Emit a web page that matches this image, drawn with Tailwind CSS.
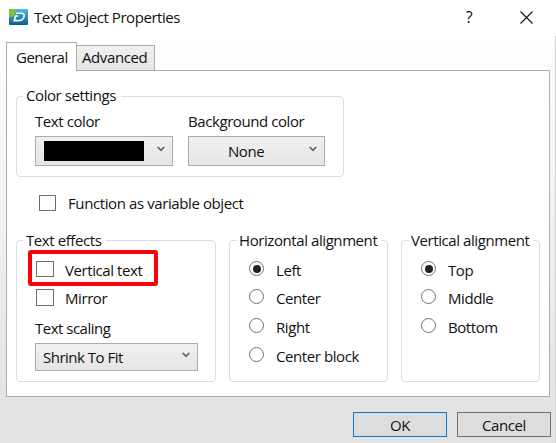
<!DOCTYPE html>
<html lang="en">
<head>
    <meta charset="UTF-8">
    <meta name="viewport" content="width=device-width, initial-scale=1.0">
    <title>Text Object Properties</title>
    <script src="https://cdn.jsdelivr.net/npm/@tailwindcss/browser@4"></script>
</head>
<body class="w-[556px] h-[443px] overflow-hidden bg-white font-['Open_Sans','Noto_Sans',sans-serif] text-[15px] leading-5 tracking-[-0.42px] text-[#111] whitespace-nowrap">
    <!-- Title bar -->
    <header class="flex items-center h-9 pl-[9px] pr-[23px]">
        <svg class="w-[19px] h-4 mt-[-3px]" viewBox="0 0 19 16">
            <defs>
                <linearGradient id="blue" x1="0" y1="0" x2="0" y2="1">
                    <stop offset="0" stop-color="#4fb8e4"/>
                    <stop offset="1" stop-color="#0a5c96"/>
                </linearGradient>
            </defs>
            <rect width="19" height="16" rx="1" fill="url(#blue)"/>
            <path d="M0 1Q0 0 1 0H8L6.5 4L4 8H0Z" fill="#7cc142"/>
            <path d="M7 4.2H12.3Q16 4.2 15 7.8Q13.9 11.6 10 11.6H5.2L6.6 7H9" fill="none" stroke="#fff" stroke-width="1.6"/>
        </svg>
        <h1 class="ml-[6px] mt-[-2px] tracking-[-0.45px]">Text Object Properties</h1>
        <div class="ml-auto flex items-center">
            <span class="text-[16px] w-2 text-center mt-[-2px]">?</span>
            <svg class="w-[13px] h-[13px] ml-[47px] mt-[-2px]" viewBox="0 0 13 13" fill="none" stroke="#111" stroke-width="1.1">
                <path d="M.5 .5L12.5 12.5M12.5 .5L.5 12.5"/>
            </svg>
        </div>
    </header>

    <main class="h-[407px] pl-[6px] pt-[6px] border-r border-[#cfcfcf] bg-linear-to-b from-white from-0% via-[#f1f1f1] via-45% to-[#e3e3e3] to-90%">
        <!-- Tabs -->
        <div class="flex items-end h-[28px]">
            <div class="relative z-10 w-[71px] h-[29px] mb-[-1px] pt-1 pl-[9px] bg-white border border-b-0 border-[#acacac] tracking-[-0.5px]">General</div>
            <div class="w-[78px] h-[25px] pt-px pl-[5px] bg-linear-to-b from-[#f0f0f0] to-[#e5e5e5] border border-l-0 border-b-0 border-[#acacac] tracking-[-0.4px]">Advanced</div>
        </div>

        <!-- General panel -->
        <section class="w-[544px] h-[327px] pt-[15px] pl-[9px] bg-white border border-[#acacac]">
            <fieldset class="w-[328px] h-[91px] pl-[18px] border border-[#d5dfe5] rounded-[4px]">
                <legend class="ml-[-12px] pl-[3px] pr-[5px] pb-[2px] leading-[18px]">Color settings</legend>
                <div class="flex gap-[15px] pt-[5px]">
                    <div class="w-[138px]">
                        <p>Text color</p>
                        <div class="flex items-center h-[30px] mt-[5px] pl-2 pr-[7px] border border-[#acacac] bg-linear-to-b from-[#f0f0f0] to-[#e5e5e5]">
                            <div class="w-[100px] h-5 bg-black"></div>
                            <svg class="w-2 h-[6px] ml-auto mt-[-4px]" viewBox="0 0 8 6" fill="none" stroke="#606060" stroke-width="1.7"><path d="M.7 1L4 4.4L7.3 1"/></svg>
                        </div>
                    </div>
                    <div class="w-[137px]">
                        <p>Background color</p>
                        <div class="flex items-center h-[30px] mt-[5px] pl-[39px] pr-[7px] border border-[#acacac] bg-linear-to-b from-[#f0f0f0] to-[#e5e5e5]">
                            <span>None</span>
                            <svg class="w-2 h-[6px] ml-auto mt-[-4px]" viewBox="0 0 8 6" fill="none" stroke="#606060" stroke-width="1.7"><path d="M.7 1L4 4.4L7.3 1"/></svg>
                        </div>
                    </div>
                </div>
            </fieldset>

            <div class="flex items-center h-5 mt-4 pl-[23px]">
                <span class="w-[17px] h-4 border border-[#707070] bg-white"></span>
                <span class="ml-3 tracking-[-0.4px]">Function as variable object</span>
            </div>

            <div class="flex gap-[13px] mt-[17px]">
                <fieldset class="w-[200px] h-[152px] pl-[18px] border border-[#d5dfe5] rounded-[4px]">
                    <legend class="ml-[-12px] pl-[3px] pr-[5px]">Text effects</legend>
                    <div class="relative pt-[10px]">
                        <!-- Highlight around the vertical text option -->
                        <div class="absolute left-[-7px] top-0 w-[130px] h-[36px] border-4 border-[#fb0007] rounded-[3px]"></div>
                        <div class="flex items-center h-5 pl-px">
                            <span class="w-[18px] h-4 mt-[-2px] border border-[#707070] bg-white"></span>
                            <span class="ml-[11px]">Vertical text</span>
                        </div>
                        <div class="flex items-center h-5 mt-2 pl-px">
                            <span class="w-[18px] h-[17px] mt-[-2px] border border-[#707070] bg-white"></span>
                            <span class="ml-[11px]">Mirror</span>
                        </div>
                    </div>
                    <p class="mt-[10px] tracking-[-0.5px]">Text scaling</p>
                    <div class="flex items-center w-[163px] h-[28px] mt-[5px] px-[7px] border border-[#acacac] bg-linear-to-b from-[#f0f0f0] to-[#e5e5e5]">
                        <span class="tracking-[-0.5px]">Shrink To Fit</span>
                        <svg class="w-2 h-[6px] ml-auto mt-[-4px]" viewBox="0 0 8 6" fill="none" stroke="#606060" stroke-width="1.7"><path d="M.7 1L4 4.4L7.3 1"/></svg>
                    </div>
                </fieldset>

                <fieldset class="w-[159px] h-[152px] pl-[19px] border border-[#d5dfe5] rounded-[4px]">
                    <legend class="ml-[-12px] pl-[2px] pr-[4px]">Horizontal alignment</legend>
                    <div class="grid gap-[9px] pt-[10px]">
                        <div class="flex items-center h-5">
                            <span class="flex items-center justify-center w-[15px] h-[15px] mt-[-3px] border border-[#707070] rounded-full"><i class="w-[8px] h-[8px] rounded-full bg-[#212121]"></i></span>
                            <span class="ml-3">Left</span>
                        </div>
                        <div class="flex items-center h-5 -mt-px">
                            <span class="w-[15px] h-[15px] mt-[-3px] border border-[#707070] rounded-full"></span>
                            <span class="ml-3">Center</span>
                        </div>
                        <div class="flex items-center h-5">
                            <span class="w-[15px] h-[15px] mt-[-3px] border border-[#707070] rounded-full"></span>
                            <span class="ml-3">Right</span>
                        </div>
                        <div class="flex items-center h-5">
                            <span class="w-[15px] h-[15px] mt-[-3px] border border-[#707070] rounded-full"></span>
                            <span class="ml-3">Center block</span>
                        </div>
                    </div>
                </fieldset>

                <fieldset class="w-[139px] h-[152px] pl-[19px] border border-[#d5dfe5] rounded-[4px]">
                    <legend class="ml-[-12px] pl-[2px] pr-[4px]">Vertical alignment</legend>
                    <div class="grid gap-[9px] pt-[10px]">
                        <div class="flex items-center h-5">
                            <span class="flex items-center justify-center w-[15px] h-[15px] mt-[-3px] border border-[#707070] rounded-full"><i class="w-[8px] h-[8px] rounded-full bg-[#212121]"></i></span>
                            <span class="ml-3">Top</span>
                        </div>
                        <div class="flex items-center h-5 -mt-px">
                            <span class="w-[15px] h-[15px] mt-[-3px] border border-[#707070] rounded-full"></span>
                            <span class="ml-3">Middle</span>
                        </div>
                        <div class="flex items-center h-5">
                            <span class="w-[15px] h-[15px] mt-[-3px] border border-[#707070] rounded-full"></span>
                            <span class="ml-3">Bottom</span>
                        </div>
                    </div>
                </fieldset>
            </div>
        </section>

        <!-- Dialog buttons -->
        <div class="flex justify-end gap-[10px] mt-[15px] pr-[4px]">
            <button class="w-[94px] h-[25px] border border-[#0078d7] bg-[#dddddd] leading-5 tracking-[-0.4px]">OK</button>
            <button class="w-[94px] h-[25px] border border-[#707070] bg-[#dddddd] leading-5 tracking-[-0.4px]">Cancel</button>
        </div>
    </main>
</body>
</html>
